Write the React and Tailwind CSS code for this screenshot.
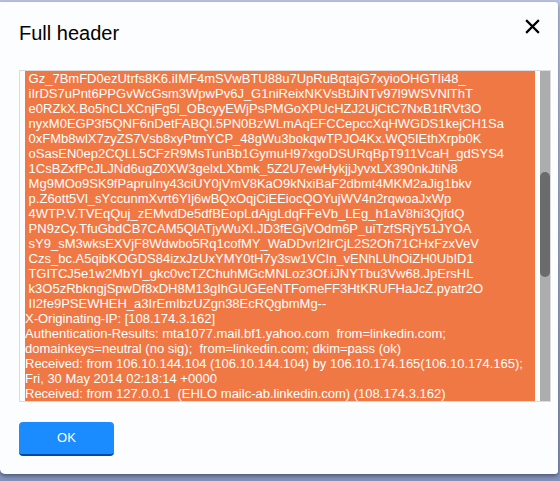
const HEADER_LINES = [
  " Gz_7BmFD0ezUtrfs8K6.iIMF4mSVwBTU88u7UpRuBqtajG7xyioOHGTIi48_",
  " iIrDS7uPnt6PPGvWcGsm3WpwPv6J_G1niReixNKVsBtJiNTv97l9WSVNlThT",
  " e0RZkX.Bo5hCLXCnjFg5l_OBcyyEWjPsPMGoXPUcHZJ2UjCtC7NxB1tRVt3O",
  " nyxM0EGP3f5QNF6nDetFABQl.5PN0BzWLmAqEFCCepccXqHWGDS1kejCH1Sa",
  " 0xFMb8wlX7zyZS7Vsb8xyPtmYCP_48gWu3bokqwTPJO4Kx.WQ5IEthXrpb0K",
  " oSasEN0ep2CQLL5CFzR9MsTunBb1GymuH97xgoDSURqBpT911VcaH_gdSYS4",
  " 1CsBZxfPcJLJNd6ugZ0XW3gelxLXbmk_5Z2U7ewHykjjJyvxLX390nkJtiN8",
  " Mg9MOo9SK9fPapruIny43ciUY0jVmV8KaO9kNxiBaF2dbmt4MKM2aJig1bkv",
  " p.Z6ott5Vl_sYccunmXvrt6YIj6wBQxOqjCiEEiocQOYujWV4n2rqwoaJxWp",
  " 4WTP.V.TVEqQuj_zEMvdDe5dfBEopLdAjgLdqFFeVb_LEg_h1aV8hi3QjfdQ",
  " PN9zCy.TfuGbdCB7CAM5QlATjyWuXI.JD3fEGjVOdm6P_uiTzfSRjY51JYOA",
  " sY9_sM3wksEXVjF8Wdwbo5Rq1cofMY_WaDDvrl2IrCjL2S2Oh71CHxFzxVeV",
  " Czs_bc.A5qibKOGDS84izxJzUxYMY0tH7y3sw1VCIn_vENhLUhOiZH0UbID1",
  " TGITCJ5e1w2MbYI_gkc0vcTZChuhMGcMNLoz3Of.iJNYTbu3Vw68.JpErsHL",
  " k3O5zRbkngjSpwDf8xDH8M13gIhGUGEeNTFomeFF3HtKRUFHaJcZ.pyatr2O",
  " II2fe9PSEWHEH_a3IrEmIbzUZgn38EcRQgbmMg--",
  "X-Originating-IP: [108.174.3.162]",
  "Authentication-Results: mta1077.mail.bf1.yahoo.com  from=linkedin.com;",
  "domainkeys=neutral (no sig);  from=linkedin.com; dkim=pass (ok)",
  "Received: from 106.10.144.104 (106.10.144.104) by 106.10.174.165(106.10.174.165);",
  "Fri, 30 May 2014 02:18:14 +0000",
  "Received: from 127.0.0.1  (EHLO mailc-ab.linkedin.com) (108.174.3.162)",
];

function App() {
  return (
    <div className="w-[560px] h-[481px] overflow-hidden pt-[2px] pr-[2px] bg-gradient-to-b from-[#bcc3e2] to-[#8393ba] font-['Liberation_Sans',sans-serif]">
      <div className="h-[472px] rounded-r-[3px] rounded-bl-[5px] bg-[#fcfdff] shadow-[0_2px_4px_rgba(20,25,50,0.5)] pl-[19px] pr-[7px] flex flex-col">
        {/* Title row */}
        <div className="h-[68px] flex items-start justify-between">
          <h2 className="mt-[19px] text-[20px] leading-[24px] text-black">Full header</h2>
          <button type="button" className="mt-[16px] mr-[10px] w-[17px] h-[17px] text-black">
            <svg viewBox="0 0 16 16" className="w-[17px] h-[17px]" fill="none" stroke="currentColor" strokeWidth="2">
              <path d="M2 2l12 12M14 2L2 14" />
            </svg>
          </button>
        </div>

        {/* Scrolling header text */}
        <div className="h-[332px] border border-[#dcdcdc] flex overflow-hidden">
          <div className="flex-1 pl-[5px] pr-[5px] overflow-hidden">
            <pre className="bg-[#f07845] text-white text-[13px] leading-[15px] h-full whitespace-pre font-['Liberation_Sans',sans-serif] overflow-hidden">
              {HEADER_LINES.join("\n")}
            </pre>
          </div>
          <div className="w-[10px] bg-[#adadad]">
            <div className="mt-[101px] h-[105px] rounded-[5px] bg-[#6b6b6b]" />
          </div>
        </div>

        {/* Footer */}
        <div className="pt-[20px]">
          <button type="button" className="w-[95px] h-[34px] rounded-[4px] bg-[#1a8cff] border-b-2 border-[#0a479e] text-white text-[13px]">
            OK
          </button>
        </div>
      </div>
    </div>
  );
}

export default App;
